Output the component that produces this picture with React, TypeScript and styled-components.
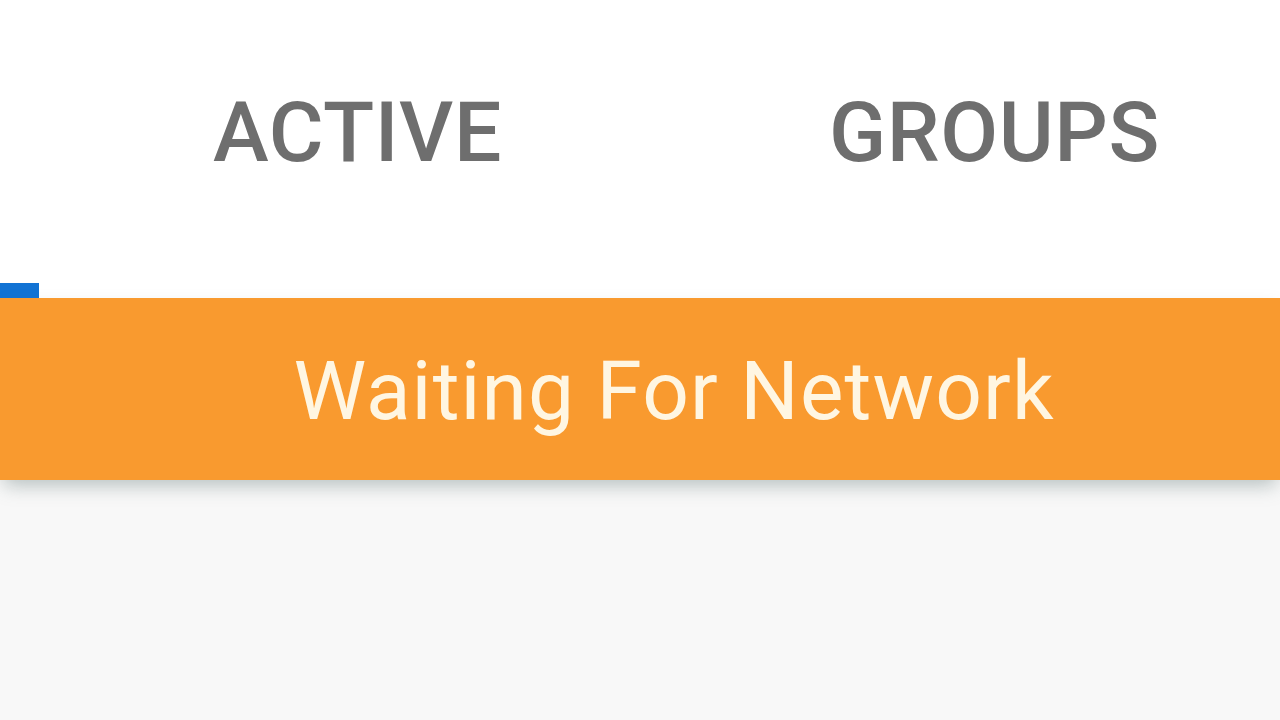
import styled, { createGlobalStyle } from "styled-components";

const GlobalStyle = createGlobalStyle`
  html, body {
    margin: 0;
    padding: 0;
    width: 1280px;
    height: 720px;
    overflow: hidden;
    background: #f8f8f8;
    font-family: Roboto, "Noto Sans", sans-serif;
  }
`;

const tabs = [
  { label: "", active: true },
  { label: "ACTIVE", active: false },
  { label: "GROUPS", active: false },
];

const App = () => {
  return (
    <Screen>
      <GlobalStyle />
      <TabBar>
        {tabs.map((tab, i) => (
          <Tab key={i} $active={tab.active}>
            {tab.label}
          </Tab>
        ))}
      </TabBar>
      <StatusBanner>
        <StatusText>Waiting For Network</StatusText>
      </StatusBanner>
      <Content />
    </Screen>
  );
};

export default App;

const Screen = styled.div`
  width: 1280px;
  height: 720px;
  display: flex;
  flex-direction: column;
  overflow: hidden;
  background: #f8f8f8;
`;

const TabBar = styled.div`
  height: 298px;
  flex-shrink: 0;
  display: flex;
  margin-left: -598px;
  background: #ffffff;
`;

const Tab = styled.div<{ $active: boolean }>`
  position: relative;
  width: 637px;
  flex-shrink: 0;
  display: flex;
  justify-content: center;
  padding-top: 91px;
  box-sizing: border-box;
  font-size: 84px;
  font-weight: 500;
  line-height: 1;
  letter-spacing: 0.6px;
  color: #6e6e6e;

  &::after {
    content: "";
    position: absolute;
    left: 0;
    right: 0;
    bottom: 0;
    height: 15px;
    background: ${({ $active }) => ($active ? "#1273d4" : "transparent")};
  }
`;

const StatusBanner = styled.div`
  position: relative;
  z-index: 1;
  height: 182px;
  flex-shrink: 0;
  display: flex;
  align-items: center;
  justify-content: center;
  padding-left: 68px;
  background: #f99a2f;
  box-shadow: 0 9px 18px -4px rgba(80, 105, 105, 0.4);
`;

const StatusText = styled.div`
  font-size: 82px;
  font-weight: 400;
  line-height: 1;
  letter-spacing: 1.1px;
  color: #fff6e2;
  margin-top: 4px;
`;

const Content = styled.div`
  flex: 1;
  background: #f8f8f8;
`;
